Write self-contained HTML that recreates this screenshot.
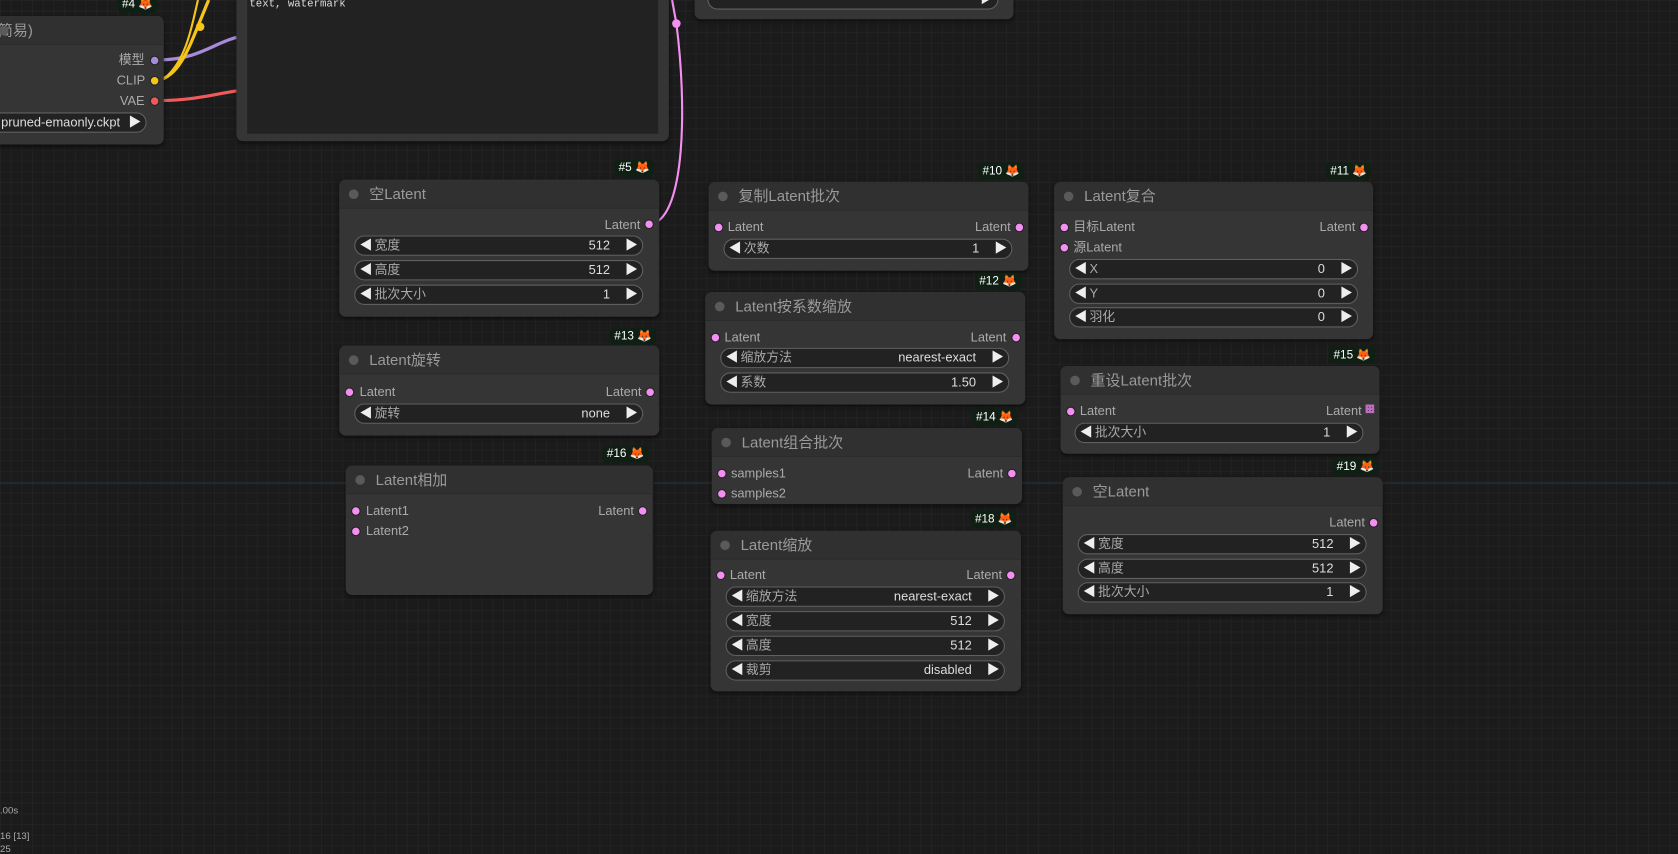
<!DOCTYPE html>
<html><head><meta charset="utf-8"><style>
html,body{margin:0;padding:0;width:1678px;height:854px;overflow:hidden;background:#1a1a1a}
#w{position:absolute;left:0;top:0;width:1568px;height:798px;transform:scale(1.0702);transform-origin:0 0;
font-family:"Liberation Sans","Noto Sans CJK SC",sans-serif;
background-color:#1b1b1b;
background-image:linear-gradient(#222 1px,transparent 1px),linear-gradient(90deg,#222 1px,transparent 1px);
background-size:10px 10px}
.n{position:absolute;background:#353535;border-radius:6px;box-shadow:0 2px 4px rgba(0,0,0,.5)}
.t{position:absolute;left:0;right:0;top:0;height:27px;background:#303030;border-radius:6px 6px 0 0;border-bottom:1px solid #2a2a2a;color:#9a9a9a;font-size:14px;line-height:27px;padding-left:28px;box-sizing:border-box}
.t:before{content:"";position:absolute;left:9px;top:9px;width:9px;height:9px;border-radius:50%;background:#5a5a5a}
.l{position:absolute;font-size:12px;color:#aaa;line-height:14px}
.d{position:absolute;width:7px;height:7px;border-radius:50%;background:#f38ff0;border:1px solid #222}
.wg{position:absolute;height:19px;background:#222;border:1px solid #606060;border-radius:10px;box-sizing:border-box;color:#ccc;font-size:12px;line-height:17px}
.wg .a{position:absolute;left:4px;top:0;font-size:12px;color:#eee}
.wg .b{position:absolute;right:4px;top:0;font-size:12px;color:#eee}
.wg .k{position:absolute;left:18px;top:0;color:#aaa}
.wg .v{position:absolute;right:30px;top:0;color:#ddd}
.bd{position:absolute;height:16px;background:#0f1f14;border-radius:4px;color:#fff;font-size:11px;line-height:16px;padding:0 4px;white-space:nowrap}
.small{position:absolute;color:#aaa;font-size:9px}
</style></head><body><div id="w">
<div style="position:absolute;left:0;right:0;top:451px;height:1px;background:#23314a"></div>

<svg style="position:absolute;left:0;top:0" width="1568" height="798">
<path d="M148 56 C185 56 200 40 221 35" stroke="#a78ad8" stroke-width="3" fill="none"/>
<path d="M148 75 C170 70 178 40 195 0" stroke="#f5c518" stroke-width="3" fill="none"/>
<path d="M155 72 C175 55 180 20 185 0" stroke="#f5c518" stroke-width="2" fill="none"/>
<circle cx="187" cy="25" r="4" fill="#f5c518"/>
<path d="M148 94 C180 94 200 88 221 85" stroke="#f05a5a" stroke-width="3" fill="none"/>
<path d="M610 209 C640 200 642 100 632 22 L628 0" stroke="#f38ff0" stroke-width="2" fill="none"/>
<circle cx="632" cy="22" r="4" fill="#f38ff0"/>
</svg>

<div class="n" style="left:-10px;top:15px;width:163px;height:120px">
<div class="t" style="padding-left:8px">简易)</div></div>
<div class="l" style="left:111px;top:49px">模型</div><div class="d" style="left:140px;top:52px;background:#a78ad8"></div>
<div class="l" style="left:109px;top:68px">CLIP</div><div class="d" style="left:140px;top:71px;background:#f5c518"></div>
<div class="l" style="left:112px;top:87px">VAE</div><div class="d" style="left:140px;top:90px;background:#f05a5a"></div>
<div class="wg" style="left:-20px;top:105px;width:157px"><span class="k" style="left:20px;color:#ddd">pruned-emaonly.ckpt</span><span class="b">▶</span></div>
<div class="bd" style="left:110px;top:-4px">#4 🦊</div>

<div class="n" style="left:221px;top:-10px;width:404px;height:142px"></div>
<div style="position:absolute;left:231px;top:-10px;width:384px;height:135px;background:#222"></div>
<div style="position:absolute;left:233px;top:-1px;color:#ddd;font:10px 'Liberation Mono',monospace">text, watermark</div>

<div class="n" style="left:649px;top:-20px;width:298px;height:38px"></div>
<div class="wg" style="left:661px;top:-10px;width:272px"><span class="b">▶</span></div>

<div class="n" style="left:317px;top:168px;width:299px;height:128px"><div class="t">空Latent</div></div>
<div class="l" style="left:565px;top:203px">Latent</div><div class="d" style="left:602px;top:205px"></div>
<div class="wg" style="left:331px;top:220px;width:270px"><span class="a">◀</span><span class="k">宽度</span><span class="v">512</span><span class="b">▶</span></div>
<div class="wg" style="left:331px;top:243px;width:270px"><span class="a">◀</span><span class="k">高度</span><span class="v">512</span><span class="b">▶</span></div>
<div class="wg" style="left:331px;top:266px;width:270px"><span class="a">◀</span><span class="k">批次大小</span><span class="v">1</span><span class="b">▶</span></div>
<div class="bd" style="left:574px;top:149px">#5 🦊</div>

<div class="n" style="left:317px;top:323px;width:299px;height:84px"><div class="t">Latent旋转</div></div>
<div class="d" style="left:322px;top:362px"></div><div class="l" style="left:336px;top:359px">Latent</div>
<div class="l" style="left:566px;top:359px">Latent</div><div class="d" style="left:603px;top:362px"></div>
<div class="wg" style="left:331px;top:377px;width:270px"><span class="a">◀</span><span class="k">旋转</span><span class="v">none</span><span class="b">▶</span></div>
<div class="bd" style="left:570px;top:306px">#13 🦊</div>

<div class="n" style="left:323px;top:435px;width:287px;height:121px"><div class="t">Latent相加</div></div>
<div class="d" style="left:328px;top:473px"></div><div class="l" style="left:342px;top:470px">Latent1</div>
<div class="d" style="left:328px;top:492px"></div><div class="l" style="left:342px;top:489px">Latent2</div>
<div class="l" style="left:559px;top:470px">Latent</div><div class="d" style="left:596px;top:473px"></div>
<div class="bd" style="left:563px;top:416px">#16 🦊</div>

<div class="n" style="left:662px;top:170px;width:299px;height:83px"><div class="t">复制Latent批次</div></div>
<div class="d" style="left:667px;top:208px"></div><div class="l" style="left:680px;top:205px">Latent</div>
<div class="l" style="left:911px;top:205px">Latent</div><div class="d" style="left:948px;top:208px"></div>
<div class="wg" style="left:676px;top:223px;width:270px"><span class="a">◀</span><span class="k">次数</span><span class="v">1</span><span class="b">▶</span></div>
<div class="bd" style="left:914px;top:152px">#10 🦊</div>

<div class="n" style="left:659px;top:273px;width:299px;height:105px"><div class="t">Latent按系数缩放</div></div>
<div class="d" style="left:664px;top:311px"></div><div class="l" style="left:677px;top:308px">Latent</div>
<div class="l" style="left:907px;top:308px">Latent</div><div class="d" style="left:945px;top:311px"></div>
<div class="wg" style="left:673px;top:325px;width:270px"><span class="a">◀</span><span class="k">缩放方法</span><span class="v">nearest-exact</span><span class="b">▶</span></div>
<div class="wg" style="left:673px;top:348px;width:270px"><span class="a">◀</span><span class="k">系数</span><span class="v">1.50</span><span class="b">▶</span></div>
<div class="bd" style="left:911px;top:255px">#12 🦊</div>

<div class="n" style="left:665px;top:400px;width:290px;height:71px"><div class="t">Latent组合批次</div></div>
<div class="d" style="left:670px;top:438px"></div><div class="l" style="left:683px;top:435px">samples1</div>
<div class="d" style="left:670px;top:457px"></div><div class="l" style="left:683px;top:454px">samples2</div>
<div class="l" style="left:904px;top:435px">Latent</div><div class="d" style="left:941px;top:438px"></div>
<div class="bd" style="left:908px;top:382px">#14 🦊</div>

<div class="n" style="left:664px;top:496px;width:290px;height:150px"><div class="t">Latent缩放</div></div>
<div class="d" style="left:669px;top:533px"></div><div class="l" style="left:682px;top:530px">Latent</div>
<div class="l" style="left:903px;top:530px">Latent</div><div class="d" style="left:940px;top:533px"></div>
<div class="wg" style="left:678px;top:548px;width:261px"><span class="a">◀</span><span class="k">缩放方法</span><span class="v">nearest-exact</span><span class="b">▶</span></div>
<div class="wg" style="left:678px;top:571px;width:261px"><span class="a">◀</span><span class="k">宽度</span><span class="v">512</span><span class="b">▶</span></div>
<div class="wg" style="left:678px;top:594px;width:261px"><span class="a">◀</span><span class="k">高度</span><span class="v">512</span><span class="b">▶</span></div>
<div class="wg" style="left:678px;top:617px;width:261px"><span class="a">◀</span><span class="k">裁剪</span><span class="v">disabled</span><span class="b">▶</span></div>
<div class="bd" style="left:907px;top:477px">#18 🦊</div>

<div class="n" style="left:985px;top:170px;width:298px;height:147px"><div class="t">Latent复合</div></div>
<div class="d" style="left:990px;top:208px"></div><div class="l" style="left:1003px;top:205px">目标Latent</div>
<div class="d" style="left:990px;top:227px"></div><div class="l" style="left:1003px;top:224px">源Latent</div>
<div class="l" style="left:1233px;top:205px">Latent</div><div class="d" style="left:1270px;top:208px"></div>
<div class="wg" style="left:999px;top:242px;width:270px"><span class="a">◀</span><span class="k">X</span><span class="v">0</span><span class="b">▶</span></div>
<div class="wg" style="left:999px;top:265px;width:270px"><span class="a">◀</span><span class="k">Y</span><span class="v">0</span><span class="b">▶</span></div>
<div class="wg" style="left:999px;top:287px;width:270px"><span class="a">◀</span><span class="k">羽化</span><span class="v">0</span><span class="b">▶</span></div>
<div class="bd" style="left:1239px;top:152px">#11 🦊</div>

<div class="n" style="left:991px;top:342px;width:298px;height:82px"><div class="t">重设Latent批次</div></div>
<div class="d" style="left:996px;top:380px"></div><div class="l" style="left:1009px;top:377px">Latent</div>
<div class="l" style="left:1239px;top:377px">Latent</div>
<div style="position:absolute;left:1276px;top:378px;width:8px;height:8px;background-image:linear-gradient(90deg,#d070d0 2px,transparent 2px),linear-gradient(#d070d0 2px,transparent 2px);background-size:3px 3px;opacity:.9"></div>
<div class="wg" style="left:1004px;top:395px;width:270px"><span class="a">◀</span><span class="k">批次大小</span><span class="v">1</span><span class="b">▶</span></div>
<div class="bd" style="left:1242px;top:324px">#15 🦊</div>

<div class="n" style="left:993px;top:446px;width:299px;height:128px"><div class="t">空Latent</div></div>
<div class="l" style="left:1242px;top:481px">Latent</div><div class="d" style="left:1279px;top:484px"></div>
<div class="wg" style="left:1007px;top:499px;width:270px"><span class="a">◀</span><span class="k">宽度</span><span class="v">512</span><span class="b">▶</span></div>
<div class="wg" style="left:1007px;top:522px;width:270px"><span class="a">◀</span><span class="k">高度</span><span class="v">512</span><span class="b">▶</span></div>
<div class="wg" style="left:1007px;top:544px;width:270px"><span class="a">◀</span><span class="k">批次大小</span><span class="v">1</span><span class="b">▶</span></div>
<div class="bd" style="left:1245px;top:428px">#19 🦊</div>

<div class="small" style="left:0;top:752px">.00s</div>
<div class="small" style="left:0;top:776px">16 [13]</div>
<div class="small" style="left:0;top:788px">25</div>
</div></body></html>
